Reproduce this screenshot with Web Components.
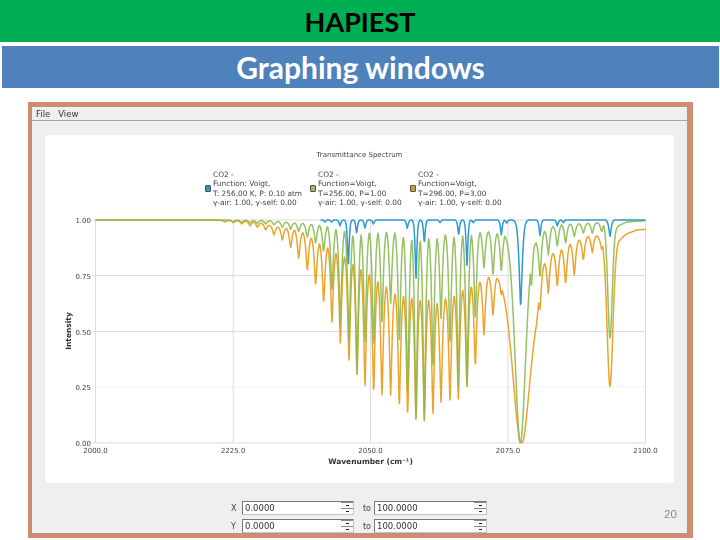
<!DOCTYPE html>
<html>
<head>
<meta charset="utf-8">
<title>HAPIEST</title>
<style>
  html, body { margin: 0; padding: 0; background: #fff; }
</style>
</head>
<body>
<hapi-slide heading="HAPIEST" subheading="Graphing windows" page="20">
  <graph-window></graph-window>
</hapi-slide>

<script>
// slide frame: the two title bars, then whatever goes in the slot
class HapiSlide extends HTMLElement {
  constructor() {
    super();
    this.attachShadow({ mode: "open" });
  }
  connectedCallback() {
    this.shadowRoot.innerHTML = `
      <style>
        :host { display: block; position: relative; width: 720px; height: 540px; overflow: hidden;
          font-family: Lato, "Liberation Sans", sans-serif; }
        .top { height: 42px; background: #00ae53; color: #000; font-weight: 700; font-size: 27px;
          display: flex; align-items: center; justify-content: center; }
        .sub { height: 42px; margin: 4px 1px 14px 2px; background: #4f81bd; color: #fff; font-weight: 700; font-size: 30px;
          display: flex; align-items: center; justify-content: center; }
        .page { position: absolute; left: 664px; top: 508px; font-size: 11.5px; color: #8b8b8b;
          font-family: "Liberation Sans", sans-serif; filter: blur(.2px); }
      </style>
      <div class="top">${this.getAttribute("heading")}</div>
      <div class="sub">${this.getAttribute("subheading")}</div>
      <slot></slot>
      <div class="page">${this.getAttribute("page")}</div>
    `;
  }
}

// one spin box, up and down arrows on the right
class SpinBox extends HTMLElement {
  constructor() {
    super();
    this.attachShadow({ mode: "open" });
    this.shadowRoot.innerHTML = `
      <style>
        :host { display: flex; height: 14px; box-sizing: border-box; background: #fff;
          border: 1px solid #c4c4c4; border-top-color: #777; border-left-color: #777;
          font: 8.5px "DejaVu Sans", sans-serif; color: #333; }
        .val { flex: 1; padding-left: 2px; line-height: 12px; }
        .btns { width: 12px; display: flex; flex-direction: column; background: #fbfbfb; }
        .btns span { flex: 1; display: flex; align-items: center; justify-content: center;
          border-top: 1px solid #8a8a8a; }
        .btns i { width: 3px; height: 1px; background: #222; }
      </style>
      <div class="val"><slot></slot></div>
      <div class="btns"><span><i></i></span><span><i></i></span></div>
    `;
  }
}

// one legend entry, colour square + lines of text
class LegendItem extends HTMLElement {
  constructor() {
    super();
    this.attachShadow({ mode: "open" });
    this.shadowRoot.innerHTML = `
      <style>
        :host { display: flex; align-items: center; gap: 2px; white-space: pre-line;
          font: 7.4px/9.4px "DejaVu Sans", sans-serif; color: #444; }
        .swatch { width: 4px; height: 5px; border: 1px solid #555; border-radius: 1px; background: var(--swatch); }
      </style>
      <div class="swatch"></div>
      <div><slot></slot></div>
    `;
  }
}

// all curve points are [x, y] read off 3x crops of the screenshot:
// the A crop starts at x=200, the B crop at x=430, both at y=210.
// a third value on a dip is its width, default is a plain line
const A = ([x, y, w]) => [104.5 + x / 3, y / 3 - 10, w];
const B = ([x, y, w]) => [334.5 + x / 3, y / 3 - 10, w];

const ORANGE_DIPS = [
  ...[[75,36],[100,38],[125,42],[150,48],[172,52],[197,60],[222,75],[247,90],[272,113],[296,145],[322,182],[347,226],[371,280],[396,340],[421,400],[447,455],[471,498],[495,532],[521,550],[546,560],[572,556],[598,592],[623,618],[648,634],[673,634],[699,616]].map(A),
  ...[[33,582],[60,575],[85,568],[111,535],[136,470],[162,377],[189,317],[214,255],[274,705,11.6],[330,298],[355,250],[382,230],[407,222],[433,195],[460,150],[487,128],[515,118],[540,530,4.2]].map(B)
];
const ORANGE_TOP = [
  [0, 0],
  ...[[0,30],[130,32],[172,36],[222,48],[280,55],[305,62],[330,75],[355,90],[380,100],[405,115],[430,125],[458,140],[483,155],[510,178],[533,195],[558,215],[583,235],[610,240],[635,245],[660,250],[686,255],[712,260]].map(A),
  ...[[45,255],[72,240],[98,228],[123,215],[148,207],[172,197],[197,195],[235,215],[320,255],[340,155],[365,128],[392,115],[415,100],[440,90],[465,80],[490,72],[520,85],[570,88],[590,72],[620,60],[646,58]].map(B)
];

const GREEN_DIPS = [
  ...[[100,36],[125,38],[150,39],[172,40],[197,42],[222,45],[247,52],[272,58],[296,65],[322,82],[347,100],[371,125],[396,240],[421,345],[447,400],[471,498],[495,400],[521,410],[546,340],[572,280],[598,400],[623,560],[648,634],[673,630],[699,470]].map(A),
  ...[[33,330],[60,400],[85,530],[111,535],[136,330],[162,175],[189,195],[214,185],[271,700,7.4],[304,230],[330,200],[355,135],[382,110],[407,100],[433,80],[460,70],[487,70],[515,65],[540,385,3.2]].map(B)
];
const GREEN_TOP = [
  [0, 0],
  ...[[0,30],[200,31],[250,35],[300,38],[400,45],[450,50],[530,52],[600,58],[712,65]].map(A),
  ...[[100,57],[170,60],[235,68],[320,90],[350,50],[400,40],[450,40],[520,36],[560,50],[590,36],[646,32]].map(B)
];

const BLUE_DIPS = [
  ...[[350,36],[375,36],[395,36],[420,48],[445,170],[470,70],[495,55],[520,42],[622,55],[648,210],[673,98]].map(A),
  ...[[30,38],[86,75],[111,170],[130,38],[214,75],[230,40],[272,290,2.2],[330,78],[382,48],[400,38],[540,80,1.6]].map(B)
];
const BLUE_TOP = [[0, 0], [551, 0]];

function topAt(points, x) {
  for (let i = 1; i < points.length; i++) {
    if (x <= points[i][0]) {
      const a = points[i - 1], b = points[i];
      return a[1] + (b[1] - a[1]) * (x - a[0]) / (b[0] - a[0]);
    }
  }
  return points[points.length - 1][1];
}

// top of the curve, minus the deepest line at this x. wide bands have steeper shoulders
function curvePath(dips, tops, lineWidth, startX = 0) {
  let s = "";
  for (let x = startX; x <= 550; x += 0.4) {
    const base = topAt(tops, x);
    let y = base;
    dips.forEach(([cx, depth, w]) => {
      const d = Math.abs(x - cx) / (w || lineWidth);
      const power = w > 3 ? 1.9 : 1.4;
      const dip = (depth - topAt(tops, cx)) * Math.exp(-Math.pow(d, power));
      if (base + dip > y) y = base + dip;
    });
    s += (s ? "L" : "M") + x.toFixed(1) + " " + Math.min(222.5, y).toFixed(1);
  }
  return s;
}

class SpectrumPlot extends HTMLElement {
  constructor() {
    super();
    this.attachShadow({ mode: "open" });
  }
  connectedCallback() {
    const xs = [0, 137.7, 275, 412.5, 550];
    const ys = [0, 55.5, 111.5, 167, 223];
    const xlab = ["2000.0", "2225.0", "2050.0", "2075.0", "2100.0"];
    const ylab = ["1.00", "0.75", "0.50", "0.25", "0.00"];
    this.shadowRoot.innerHTML = `
      <style>
        :host { display: block; width: 629px; height: 258px; }
        svg { display: block; }
        text { font: 7px "DejaVu Sans", sans-serif; fill: #444; }
        .t { font-weight: 700; font-size: 7.5px; fill: #333; }
        path { fill: none; stroke-width: 1.5; stroke-linejoin: round; }
      </style>
      <svg width="629" height="258" viewBox="-50.5 -10 629 258">
        ${ys.map((y, i) => `<line x1="-3" x2="550" y1="${y}" y2="${y}" stroke="${i === 3 ? "#f1f1f1" : "#dcdcdc"}"/>
          <text x="-4.5" y="${y + 3}" text-anchor="end">${ylab[i]}</text>`).join("")}
        ${xs.map((x, i) => `<line x1="${x}" x2="${x}" y1="0" y2="223" stroke="#dcdcdc"/>
          <text x="${x}" y="233" text-anchor="middle">${xlab[i]}</text>`).join("")}
        <path d="${curvePath(ORANGE_DIPS, ORANGE_TOP, 1.9)}" stroke="#eca52c"/>
        <path d="${curvePath(GREEN_DIPS, GREEN_TOP, 1.9)}" stroke="#88b94c" opacity=".88"/>
        <path d="${curvePath(BLUE_DIPS, BLUE_TOP, 1.2, 225)}" stroke="#2f9ad2"/>
        <text class="t" x="275" y="244" text-anchor="middle">Wavenumber (cm⁻¹)</text>
        <text class="t" transform="translate(-25 111) rotate(-90)" text-anchor="middle">Intensity</text>
      </svg>
    `;
  }
}

// the application window inside the screenshot
class GraphWindow extends HTMLElement {
  constructor() {
    super();
    this.attachShadow({ mode: "open" });
  }
  connectedCallback() {
    this.shadowRoot.innerHTML = `
      <style>
        :host { display: block; box-sizing: border-box; width: 665px; height: 436px; margin-left: 28px;
          border: 5px solid #cf8c6e; border-left-width: 4px; border-right-width: 6px; background: #efefef;
          overflow: hidden; filter: blur(.35px); }
        .menu { height: 14px; box-sizing: border-box; border-bottom: 1px solid #a4a4a4; display: flex; gap: 8px; padding-left: 4px;
          font: 8.5px/14px "DejaVu Sans", sans-serif; color: #333; }
        .card { width: 629px; height: 348px; margin: 14px 0 0 13px; box-sizing: border-box; background: #fff; border-radius: 3px;
          display: flex; flex-direction: column; padding-top: 15px; }
        .title { text-align: center; font: 7px/10px "DejaVu Sans", sans-serif; color: #444; height: 10px; }
        .legend { display: flex; margin: 10px 0 0 160px; height: 40px; align-items: flex-start; }
        .legend legend-item { width: 105px; }
        .legend legend-item:nth-child(2) { width: 100px; }
        .legend legend-item:nth-child(3) { width: 110px; }
        .ctrls { display: grid; grid-template-columns: 8px 112px 14px 113px; column-gap: 3px; row-gap: 4px; justify-content: start;
          margin: 18px 0 0 199px; align-items: center; font: 8px "DejaVu Sans", sans-serif; color: #444; }
        .to { text-align: right; }
      </style>
      <div class="menu"><span>File</span><span>View</span></div>
      <div class="card">
        <div class="title">Transmittance Spectrum</div>
        <div class="legend">
          <legend-item style="--swatch:#3f8fc0">CO2 -
Function: Voigt,
T: 256.00 K, P: 0.10 atm
γ-air: 1.00, γ-self: 0.00</legend-item>
          <legend-item style="--swatch:#9cbc58">CO2 -
Function=Voigt,
T=256.00, P=1.00
γ-air: 1.00, γ-self: 0.00</legend-item>
          <legend-item style="--swatch:#c8a030">CO2 -
Function=Voigt,
T=296.00, P=3.00
γ-air: 1.00, γ-self: 0.00</legend-item>
        </div>
        <spectrum-plot></spectrum-plot>
      </div>
      <div class="ctrls">
        <span>X</span><spin-box>0.0000</spin-box><span class="to">to</span><spin-box>100.0000</spin-box>
        <span>Y</span><spin-box>0.0000</spin-box><span class="to">to</span><spin-box>100.0000</spin-box>
      </div>
    `;
  }
}

customElements.define("hapi-slide", HapiSlide);
customElements.define("spin-box", SpinBox);
customElements.define("legend-item", LegendItem);
customElements.define("spectrum-plot", SpectrumPlot);
customElements.define("graph-window", GraphWindow);
</script>
</body>
</html>
